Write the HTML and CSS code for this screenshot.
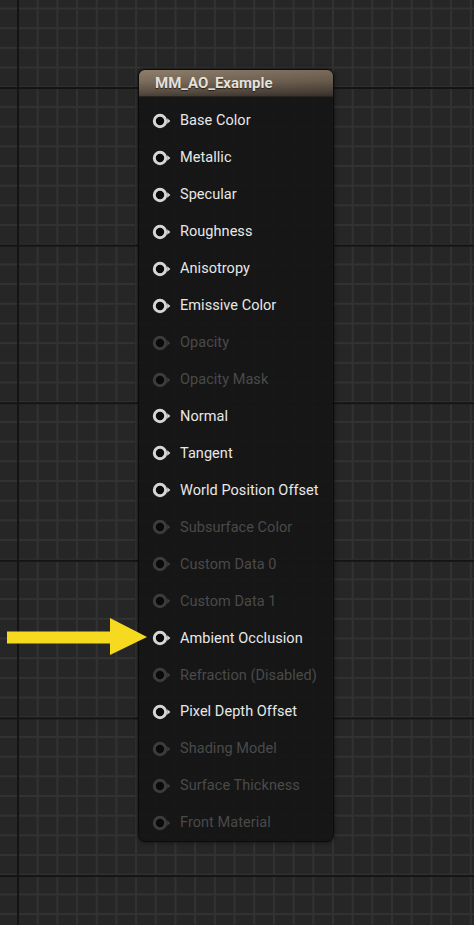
FILE: index.html
```html
<!DOCTYPE html>
<html>
<head>
<meta charset="utf-8">
<link rel="stylesheet" href="styles.css">
</head>
<body>
<div class="canvas">
  <div class="node">
    <div class="node-header">MM_AO_Example</div>
    <div class="node-body">
      <div class="pin-row"><svg class="pin" viewBox="0 0 20 16"><circle cx="8" cy="8" r="5.7"/><polygon points="15.2,5.2 18.4,8 15.2,10.8"/></svg><span>Base Color</span></div>
      <div class="pin-row"><svg class="pin" viewBox="0 0 20 16"><circle cx="8" cy="8" r="5.7"/><polygon points="15.2,5.2 18.4,8 15.2,10.8"/></svg><span>Metallic</span></div>
      <div class="pin-row"><svg class="pin" viewBox="0 0 20 16"><circle cx="8" cy="8" r="5.7"/><polygon points="15.2,5.2 18.4,8 15.2,10.8"/></svg><span>Specular</span></div>
      <div class="pin-row"><svg class="pin" viewBox="0 0 20 16"><circle cx="8" cy="8" r="5.7"/><polygon points="15.2,5.2 18.4,8 15.2,10.8"/></svg><span>Roughness</span></div>
      <div class="pin-row"><svg class="pin" viewBox="0 0 20 16"><circle cx="8" cy="8" r="5.7"/><polygon points="15.2,5.2 18.4,8 15.2,10.8"/></svg><span>Anisotropy</span></div>
      <div class="pin-row"><svg class="pin" viewBox="0 0 20 16"><circle cx="8" cy="8" r="5.7"/><polygon points="15.2,5.2 18.4,8 15.2,10.8"/></svg><span>Emissive Color</span></div>
      <div class="pin-row off"><svg class="pin" viewBox="0 0 20 16"><circle cx="8" cy="8" r="5.7"/><polygon points="15.2,5.2 18.4,8 15.2,10.8"/></svg><span>Opacity</span></div>
      <div class="pin-row off"><svg class="pin" viewBox="0 0 20 16"><circle cx="8" cy="8" r="5.7"/><polygon points="15.2,5.2 18.4,8 15.2,10.8"/></svg><span>Opacity Mask</span></div>
      <div class="pin-row"><svg class="pin" viewBox="0 0 20 16"><circle cx="8" cy="8" r="5.7"/><polygon points="15.2,5.2 18.4,8 15.2,10.8"/></svg><span>Normal</span></div>
      <div class="pin-row"><svg class="pin" viewBox="0 0 20 16"><circle cx="8" cy="8" r="5.7"/><polygon points="15.2,5.2 18.4,8 15.2,10.8"/></svg><span>Tangent</span></div>
      <div class="pin-row"><svg class="pin" viewBox="0 0 20 16"><circle cx="8" cy="8" r="5.7"/><polygon points="15.2,5.2 18.4,8 15.2,10.8"/></svg><span>World Position Offset</span></div>
      <div class="pin-row off"><svg class="pin" viewBox="0 0 20 16"><circle cx="8" cy="8" r="5.7"/><polygon points="15.2,5.2 18.4,8 15.2,10.8"/></svg><span>Subsurface Color</span></div>
      <div class="pin-row off"><svg class="pin" viewBox="0 0 20 16"><circle cx="8" cy="8" r="5.7"/><polygon points="15.2,5.2 18.4,8 15.2,10.8"/></svg><span>Custom Data 0</span></div>
      <div class="pin-row off"><svg class="pin" viewBox="0 0 20 16"><circle cx="8" cy="8" r="5.7"/><polygon points="15.2,5.2 18.4,8 15.2,10.8"/></svg><span>Custom Data 1</span></div>
      <div class="pin-row"><svg class="pin" viewBox="0 0 20 16"><circle cx="8" cy="8" r="5.7"/><polygon points="15.2,5.2 18.4,8 15.2,10.8"/></svg><span>Ambient Occlusion</span></div>
      <div class="pin-row off"><svg class="pin" viewBox="0 0 20 16"><circle cx="8" cy="8" r="5.7"/><polygon points="15.2,5.2 18.4,8 15.2,10.8"/></svg><span>Refraction (Disabled)</span></div>
      <div class="pin-row"><svg class="pin" viewBox="0 0 20 16"><circle cx="8" cy="8" r="5.7"/><polygon points="15.2,5.2 18.4,8 15.2,10.8"/></svg><span>Pixel Depth Offset</span></div>
      <div class="pin-row off"><svg class="pin" viewBox="0 0 20 16"><circle cx="8" cy="8" r="5.7"/><polygon points="15.2,5.2 18.4,8 15.2,10.8"/></svg><span>Shading Model</span></div>
      <div class="pin-row off"><svg class="pin" viewBox="0 0 20 16"><circle cx="8" cy="8" r="5.7"/><polygon points="15.2,5.2 18.4,8 15.2,10.8"/></svg><span>Surface Thickness</span></div>
      <div class="pin-row off"><svg class="pin" viewBox="0 0 20 16"><circle cx="8" cy="8" r="5.7"/><polygon points="15.2,5.2 18.4,8 15.2,10.8"/></svg><span>Front Material</span></div>
    </div>
  </div>
  <svg class="arrow" viewBox="0 0 150 50" width="150" height="50">
    <polygon points="7,21.5 110,21.5 110,8 147,27 110,45 110,33.5 7,33.5"/>
  </svg>
</div>
</body>
</html>
```
FILE: styles.css
```css
html, body {
  margin: 0;
  padding: 0;
  background: #262626;
}

.canvas {
  position: relative;
  width: 474px;
  height: 925px;
  overflow: hidden;
  background-color: #262626;
  background-image:
    linear-gradient(to right, #141414 2px, transparent 2px),
    linear-gradient(to bottom, #141414 2px, transparent 2px),
    linear-gradient(to right, #323232 2px, transparent 2px),
    linear-gradient(to bottom, #323232 2px, transparent 2px);
  background-size:
    100% 100%,
    157.6px 157.6px,
    19.7px 19.7px,
    19.7px 19.7px;
  background-repeat:
    no-repeat,
    repeat,
    repeat,
    repeat;
  background-position:
    17px 0,
    0 87px,
    17px 0,
    0 7.5px;
  font-family: Roboto, "Liberation Sans", sans-serif;
}

.node {
  position: absolute;
  left: 138px;
  top: 69px;
  width: 196px;
  height: 773px;
  box-sizing: border-box;
  border: 1px solid #0c0c0c;
  border-radius: 7px;
  background: rgba(21, 21, 21, 0.93);
  box-shadow: 0 0 4px rgba(0, 0, 0, 0.6);
  overflow: hidden;
  display: flex;
  flex-direction: column;
}

.node-header {
  height: 26px;
  flex: 0 0 26px;
  display: flex;
  align-items: center;
  padding-left: 16px;
  background:
    linear-gradient(90deg, rgba(255, 230, 200, 0.07), rgba(0, 0, 0, 0.1)),
    linear-gradient(180deg, #867666 0%, #716252 45%, #4d433a 85%, #3c342e 100%);
  border-bottom: 1px solid #2a2520;
  color: #e4e1dd;
  font-size: 15px;
  font-weight: 700;
  text-shadow: 0 1px 1px rgba(0, 0, 0, 0.6);
}

.node-body {
  padding-top: 5.5px;
  display: flex;
  flex-direction: column;
}

.pin-row {
  height: 36.95px;
  display: flex;
  align-items: center;
  padding-left: 13px;
  gap: 8px;
  color: #e8e8e8;
  font-size: 14.5px;
  letter-spacing: 0.05px;
}

.pin {
  width: 20px;
  height: 16px;
  flex: 0 0 20px;
}

.pin circle {
  fill: #0a0a0a;
  stroke: #d6d6d6;
  stroke-width: 3;
}

.pin polygon {
  fill: #d6d6d6;
}

.pin-row.off {
  color: #4a4a4a;
}

.pin-row.off .pin circle {
  stroke: #3c3c3c;
  fill: #0a0a0a;
}

.pin-row.off .pin polygon {
  fill: #3c3c3c;
}

.arrow {
  position: absolute;
  left: 0;
  top: 610px;
}

.arrow polygon {
  fill: #f6da1f;
}
```
